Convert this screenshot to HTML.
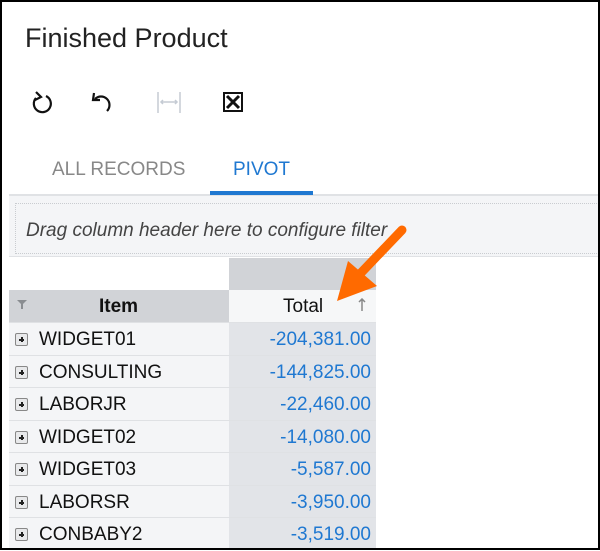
<!DOCTYPE html>
<html><head><style>
*{margin:0;padding:0;box-sizing:border-box}
body{width:600px;height:550px;overflow:hidden;background:#fff;font-family:"Liberation Sans",Arial,sans-serif;position:relative}
.frame{position:absolute;left:0;top:0;width:600px;height:550px;border:2px solid #000}
.abs{position:absolute}
.row{position:absolute;left:9px;width:367px;height:33px;border-top:1px solid #dfe1e4}
.row .l{position:absolute;left:0;top:0;width:220px;height:100%;background:#f4f5f7}
.row .r{position:absolute;left:220px;top:0;width:147px;height:100%;background:#e2e4e8;color:#1f78d1;font-size:19px;text-align:right;padding-right:5px;line-height:33px}
.row .t{position:absolute;left:30px;top:0;line-height:33px;font-size:19px;color:#111}
.pl{position:absolute;left:6px;top:10px;width:13px;height:13px;border:1px solid #888;border-radius:2px;background:#e8e9eb}
.pl:before{content:"";position:absolute;left:3px;top:5px;width:5px;height:1.5px;background:#222}
.pl:after{content:"";position:absolute;left:5px;top:3px;width:1.5px;height:5px;background:#222}
</style></head><body>
<div class="abs" style="left:25px;top:23px;font-size:27px;color:#222">Finished Product</div>
<svg class="abs" style="left:28px;top:88px" width="230" height="30" viewBox="0 0 230 30">
<path d="M18 8 A8.5 8.5 0 1 1 8 10" fill="none" stroke="#111" stroke-width="2.2"/>
<path d="M8 4 L13 9 L7 12" fill="none" stroke="#111" stroke-width="2.2"/>
<path d="M67 11 A8 8 0 1 1 79 23" fill="none" stroke="#111" stroke-width="2.2"/>
<path d="M66 5 L65 12 L72 12" fill="none" stroke="#111" stroke-width="2.2"/>
<path d="M130 4 V25 M152 4 V25 M133 14 H149 M135 12 L133 14 L135 16 M147 12 L149 14 L147 16" fill="none" stroke="#c5cbd4" stroke-width="1.5"/>
<rect x="196" y="5" width="18" height="18" fill="#fff" stroke="#111" stroke-width="2"/>
<path d="M199 8 L211 20 M211 8 L199 20" stroke="#111" stroke-width="3"/>
</svg>
<div class="abs" style="left:52px;top:159px;font-size:19px;color:#888">ALL RECORDS</div>
<div class="abs" style="left:233px;top:159px;font-size:19px;color:#1f78d1">PIVOT</div>
<div class="abs" style="left:9px;top:194px;width:591px;height:2px;background:#e0e2e5"></div>
<div class="abs" style="left:210px;top:191px;width:103px;height:4px;background:#1f78d1"></div>
<div class="abs" style="left:9px;top:196px;width:591px;height:61px;background:#f4f5f7;border-bottom:1px solid #e0e2e5"></div>
<div class="abs" style="left:15px;top:203px;width:590px;height:51px;border:1px dotted #c9ccd0"></div>
<div class="abs" style="left:26px;top:220px;font-size:19px;font-style:italic;color:#444">Drag column header here to configure filter</div>
<div class="abs" style="left:229px;top:258px;width:147px;height:32px;background:#d1d3d7"></div>
<div class="abs" style="left:9px;top:290px;width:220px;height:32px;background:#d1d3d7"></div>
<div class="abs" style="left:99px;top:296px;font-size:19px;font-weight:bold;color:#111">Item</div>
<svg class="abs" style="left:16px;top:299px" width="12" height="12"><path d="M1 1 H11 L7 5 V10 L5 10 V5 Z" fill="#8a8d91"/></svg>
<div class="abs" style="left:229px;top:290px;width:147px;height:32px;background:#f6f7f8"></div>
<div class="abs" style="left:283px;top:296px;font-size:19px;color:#111">Total</div>
<svg class="abs" style="left:357px;top:298px" width="10" height="14"><path d="M5 1 V13 M2 4 L5 1 L8 4" fill="none" stroke="#888" stroke-width="1.5"/></svg>
<div class="row" style="top:322px"><div class="l"><div class="pl"></div><div class="t">WIDGET01</div></div><div class="r">-204,381.00</div></div>
<div class="row" style="top:355px"><div class="l"><div class="pl"></div><div class="t">CONSULTING</div></div><div class="r">-144,825.00</div></div>
<div class="row" style="top:387px"><div class="l"><div class="pl"></div><div class="t">LABORJR</div></div><div class="r">-22,460.00</div></div>
<div class="row" style="top:420px"><div class="l"><div class="pl"></div><div class="t">WIDGET02</div></div><div class="r">-14,080.00</div></div>
<div class="row" style="top:452px"><div class="l"><div class="pl"></div><div class="t">WIDGET03</div></div><div class="r">-5,587.00</div></div>
<div class="row" style="top:485px"><div class="l"><div class="pl"></div><div class="t">LABORSR</div></div><div class="r">-3,950.00</div></div>
<div class="row" style="top:517px"><div class="l"><div class="pl"></div><div class="t">CONBABY2</div></div><div class="r">-3,519.00</div></div>
<svg class="abs" style="left:0;top:0" width="600" height="550">
<path d="M402 230 L358 276" stroke="#ff6a00" stroke-width="9" stroke-linecap="round"/>
<path d="M348 261 L377 286 L337 301 Z" fill="#ff6a00"/>
</svg>
<div class="frame"></div>
</body></html>
